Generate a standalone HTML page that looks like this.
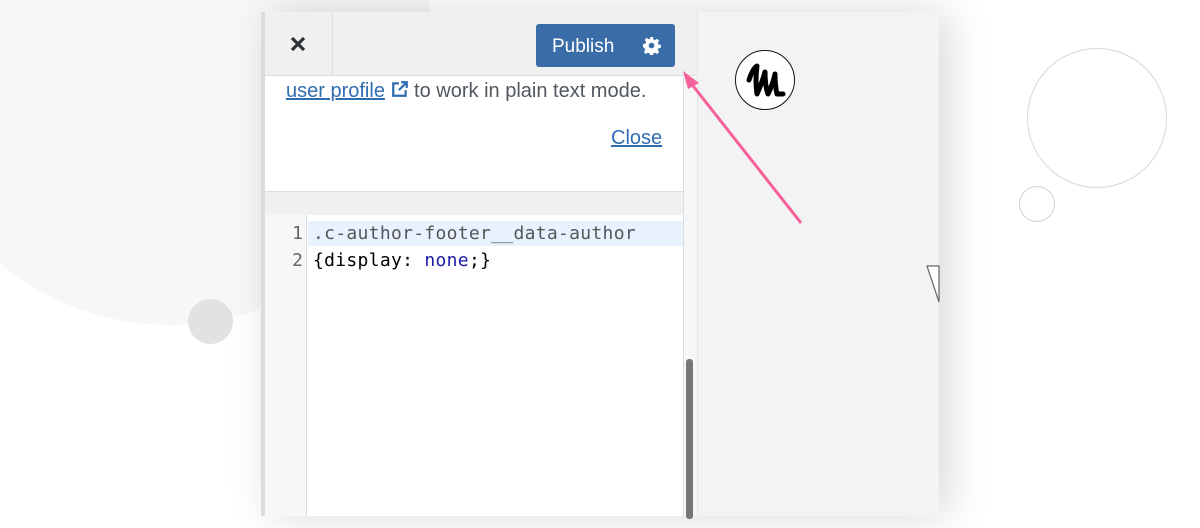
<!DOCTYPE html>
<html><head><style>
*{margin:0;padding:0;box-sizing:border-box}
body{width:1200px;height:528px;background:#fff;position:relative;overflow:hidden;font-family:"Liberation Sans",sans-serif}
.a{position:absolute}
</style></head><body>
<div class="a" style="left:-95px;top:-205px;width:530px;height:530px;border-radius:50%;background:#f7f7f7"></div>
<div class="a" style="left:188px;top:299px;width:45px;height:45px;border-radius:50%;background:#e2e2e2"></div>
<div class="a" style="left:1027px;top:48px;width:140px;height:140px;border-radius:50%;border:1px solid #d8d8d8"></div>
<div class="a" style="left:1019px;top:186px;width:36px;height:36px;border-radius:50%;border:1px solid #d0d0d0"></div>
<div class="a" style="left:261px;top:12px;width:678px;height:504px;box-shadow:10px 0 40px rgba(0,0,0,0.15)"></div>
<div class="a" style="left:261px;top:12px;width:436px;height:504px;background:#fff;border-left:4px solid #dcdcde"></div>
<div class="a" style="left:265px;top:12px;width:432px;height:64px;background:#f0f0f1;border-bottom:1px solid #dcdcde"></div>
<div class="a" style="left:332px;top:12px;width:1px;height:64px;background:#dcdcde"></div>
<svg class="a" style="left:290px;top:36px" width="16" height="16"><path d="M2 2L14 14M14 2L2 14" stroke="#2c3338" stroke-width="3.2"/></svg>
<div class="a" style="left:536px;top:24px;width:139px;height:43px;background:#3a6da8;border-radius:3px;color:#fff;font-size:19px">
<span class="a" style="left:16px;top:12px">Publish</span>
<svg class="a" style="left:106px;top:12px" width="19" height="19" viewBox="0 0 20 20"><path fill="#fff" d="M8.5 1h3l.5 2.5 1.7.8 2.2-1.4 2.1 2.1-1.4 2.2.8 1.7 2.5.5v3l-2.5.5-.8 1.7 1.4 2.2-2.1 2.1-2.2-1.4-1.7.8-.5 2.5h-3l-.5-2.5-1.7-.8-2.2 1.4-2.1-2.1 1.4-2.2-.8-1.7L1 11.5v-3l2.5-.5.8-1.7-1.4-2.2 2.1-2.1 2.2 1.4 1.7-.8z M10 7a3 3 0 1 0 0 6 3 3 0 1 0 0-6z" fill-rule="evenodd"/></svg>
</div>
<div class="a" style="left:683px;top:77px;width:14px;height:439px;background:#f6f7f7;border-left:1px solid #dcdcde"></div>
<div class="a" style="left:686px;top:359px;width:7px;height:160px;background:#777;border-radius:3px"></div>
<div class="a" style="left:286px;top:80px;font-size:20px;color:#50575e;white-space:nowrap"><span style="color:#2f6db1;text-decoration:underline">user profile</span> <svg width="18" height="18" viewBox="0 0 16 16" style="vertical-align:-1px"><path fill="none" stroke="#2f6db1" stroke-width="2" d="M7 3H2v11h11V9M9 2h5v5M14 2L7 9"/></svg> to work in plain text mode.</div>
<div class="a" style="left:611px;top:127px;font-size:20px;color:#2f6db1;text-decoration:underline">Close</div>
<div class="a" style="left:265px;top:191px;width:418px;height:24px;background:#f0f0f1;border-top:1px solid #dcdcde"></div>
<div class="a" style="left:265px;top:215px;width:42px;height:301px;background:#f6f7f7;border-right:1px solid #dcdcde"></div>
<div class="a" style="left:308px;top:221px;width:375px;height:25px;background:#e8f2ff"></div>
<div class="a" style="left:265px;top:220px;width:38px;font-family:'DejaVu Sans Mono',monospace;font-size:18px;line-height:27px;color:#666;text-align:right">1<br>2</div>
<div class="a" style="left:313px;top:220px;font-family:'DejaVu Sans Mono',monospace;font-size:18px;line-height:27px;color:#000;white-space:nowrap;letter-spacing:0.3px"><span style="color:#555">.c-author-footer__data-author</span><br>{display: <span style="color:#1a1aa6">none</span>;}</div>
<div class="a" style="left:697px;top:12px;width:242px;height:504px;background:#f3f3f3;border-left:1px solid #e4e4e4"></div>
<div class="a" style="left:735px;top:50px;width:60px;height:60px;border-radius:50%;border:1.5px solid #111;background:#fff"></div>
<svg class="a" style="left:735px;top:50px" width="60" height="60"><path d="M14 30 Q18 18 22 16 Q20 30 22 44 Q28 30 30 22 Q30 36 33 44 Q38 34 40 24 Q40 36 42 44 L48 44" fill="none" stroke="#000" stroke-width="5" stroke-linecap="round" stroke-linejoin="round"/></svg>
<svg class="a" style="left:926px;top:262px" width="14" height="44"><path d="M1 4 L13 4 L13 40 Z" fill="#fff" stroke="#666" stroke-width="1.2"/></svg>
<svg class="a" style="left:0;top:0" width="1200" height="528"><line x1="801" y1="223" x2="690" y2="82" stroke="#f5609a" stroke-width="3"/><path d="M683 71 L699 83 L688 89 Z" fill="#f5609a"/></svg>
</body></html>
